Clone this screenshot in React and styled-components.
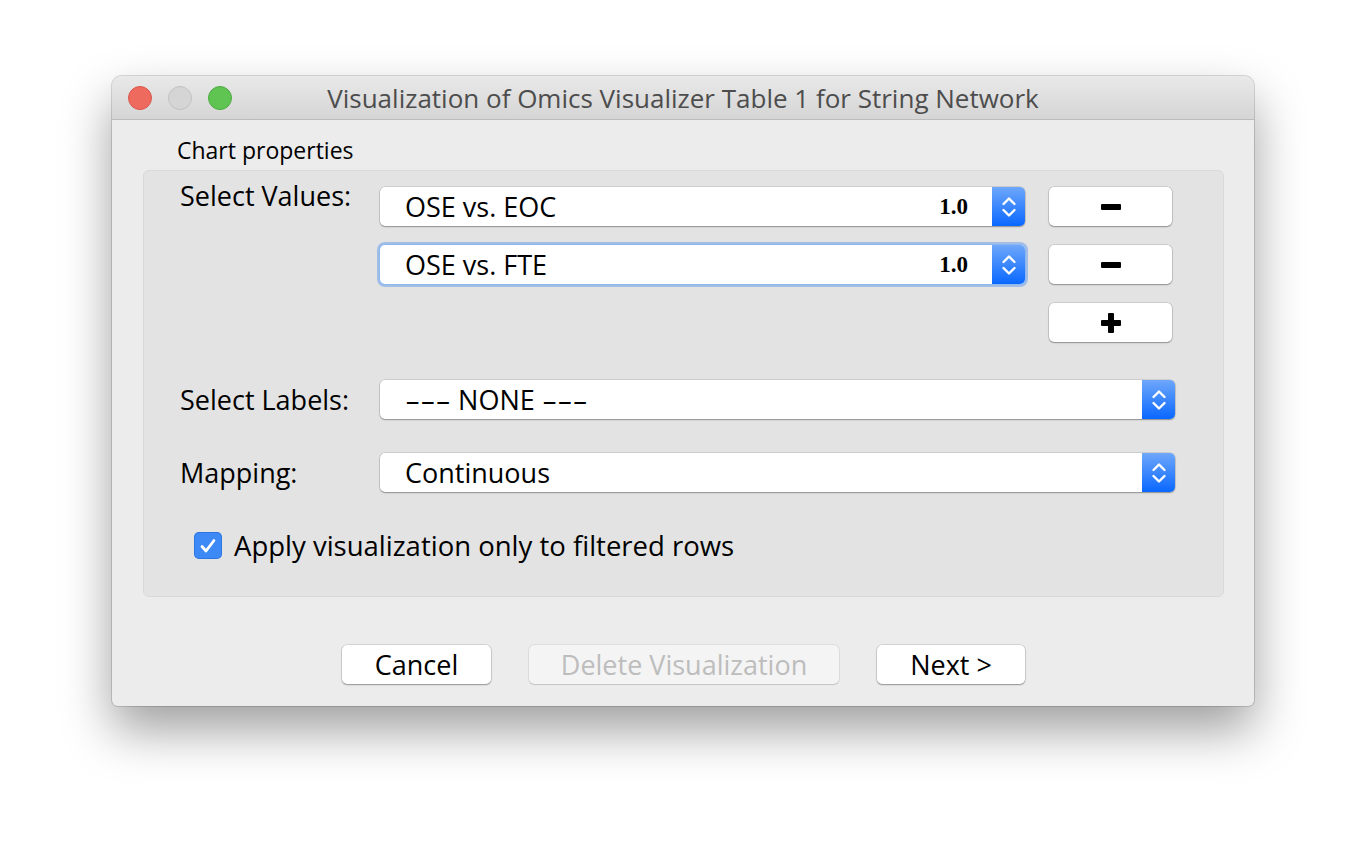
import { Fragment } from "react";
import styled, { createGlobalStyle } from "styled-components";

const GlobalStyle = createGlobalStyle`
  html, body {
    margin: 0;
    padding: 0;
    background: #ffffff;
  }
  body {
    font-family: "Open Sans", "DejaVu Sans", sans-serif;
    color: #000;
  }
`;

const Desktop = styled.div`
  padding: 76px 0 0 112px;
  height: 854px;
  box-sizing: border-box;
  overflow: hidden;
`;

const Window = styled.div`
  width: 1142px;
  background: #ececec;
  border-radius: 10px 10px 6px 6px;
  box-shadow: 0 24px 50px rgba(0, 0, 0, 0.38), 0 0 0 1px rgba(0, 0, 0, 0.14);
  overflow: hidden;
`;

const TitleBar = styled.div`
  height: 43px;
  display: grid;
  grid-template-columns: 1fr auto 1fr;
  align-items: center;
  background: linear-gradient(#e9e9e9, #d5d5d5);
  border-bottom: 1px solid #bcbcbc;
`;

const Lights = styled.div`
  display: flex;
  gap: 16px;
  padding-left: 16px;
`;

const Light = styled.span`
  width: 24px;
  height: 24px;
  box-sizing: border-box;
  border-radius: 50%;
  background: ${(p) => p.$fill};
  border: 1px solid ${(p) => p.$edge};
`;

const Title = styled.div`
  font-size: 26px;
  color: #4d4d4d;
  white-space: nowrap;
`;

const Body = styled.div`
  padding: 0 30px 22px 31px;
`;

const Heading = styled.div`
  height: 50px;
  box-sizing: border-box;
  padding: 15px 0 0 34px;
  font-size: 23px;
  line-height: 30px;
`;

const Panel = styled.div`
  height: 427px;
  box-sizing: border-box;
  background: #e3e3e3;
  border: 1px solid #d9d9d9;
  border-radius: 6px;
  padding: 16px 48px 0 36px;
`;

const ValuesGrid = styled.div`
  display: grid;
  grid-template-columns: 176px 645px 123px;
  grid-auto-rows: 39px;
  column-gap: 24px;
  row-gap: 19px;
`;

const Label = styled.div`
  font-size: 27px;
  line-height: 27px;
  white-space: nowrap;
  align-self: ${(p) => (p.$top ? "start" : "center")};
  margin-top: ${(p) => (p.$top ? "-5px" : "0")};
`;

const FieldRow = styled.div`
  display: grid;
  grid-template-columns: 200px 795px;
  height: 39px;
  align-items: center;
  margin-top: ${(p) => p.$gap}px;
`;

const Combo = styled.div`
  height: 39px;
  box-sizing: border-box;
  display: flex;
  align-items: stretch;
  background: #fff;
  border-radius: 5px;
  box-shadow: ${(p) =>
    p.$focused
      ? "0 0 0 1px #8db7f0, 0 0 0 3px rgba(110, 160, 235, 0.55)"
      : "0 0 0 0.5px rgba(0,0,0,0.18), 0 1px 1.5px rgba(0,0,0,0.3)"};
`;

const ComboText = styled.div`
  flex: 1;
  display: flex;
  align-items: center;
  padding-left: 25px;
  font-size: 27px;
  white-space: pre;
`;

const Dashes = styled.span`
  display: inline-block;
  transform: scaleX(1.75);
  transform-origin: 0 50%;
  margin-right: 20px;
`;

const Weight = styled.span`
  margin-left: auto;
  margin-right: 24px;
  font-family: "Liberation Serif", "Times New Roman", serif;
  font-weight: bold;
  font-size: 23px;
`;

const Stepper = styled.div`
  width: 33px;
  flex-shrink: 0;
  display: flex;
  align-items: center;
  justify-content: center;
  border-radius: 0 5px 5px 0;
  background: linear-gradient(#6ea7fb, #0a68ff);
`;

const SquareButton = styled.button`
  height: 39px;
  width: 123px;
  padding: 0;
  display: flex;
  align-items: center;
  justify-content: center;
  background: #fff;
  border: none;
  border-radius: 5px;
  box-shadow: 0 0 0 0.5px rgba(0, 0, 0, 0.2), 0 1px 1.5px rgba(0, 0, 0, 0.3);
  grid-column: 3;
`;

const CheckRow = styled.label`
  display: flex;
  align-items: center;
  gap: 12px;
  margin: 35px 0 0 14px;
  font-size: 27.5px;
`;

const CheckBox = styled.span`
  width: 28px;
  height: 27px;
  border-radius: 5px;
  background: #3d8af7;
  display: flex;
  align-items: center;
  justify-content: center;
  box-shadow: inset 0 0 0 1px rgba(0, 60, 160, 0.25);
`;

const Footer = styled.div`
  display: flex;
  justify-content: center;
  gap: 38px;
  margin-top: 48px;
`;

const PushButton = styled.button`
  height: 39px;
  width: ${(p) => p.$w}px;
  padding: 0;
  font-family: "Open Sans", "DejaVu Sans", sans-serif;
  font-size: 27px;
  color: ${(p) => (p.disabled ? "#bdbdbd" : "#000")};
  background: ${(p) => (p.disabled ? "#f4f4f4" : "#fff")};
  border: none;
  border-radius: 5px;
  box-shadow: ${(p) =>
    p.disabled
      ? "0 0 0 0.5px rgba(0,0,0,0.12), 0 1px 1px rgba(0,0,0,0.12)"
      : "0 0 0 0.5px rgba(0,0,0,0.2), 0 1px 1.5px rgba(0,0,0,0.3)"};
`;

const Chevrons = () => (
  <svg width="16" height="24" viewBox="0 0 16 24">
    <path
      d="M2.5 9 L8 3.5 L13.5 9 M2.5 15 L8 20.5 L13.5 15"
      fill="none"
      stroke="#fff"
      strokeWidth="2.4"
      strokeLinecap="round"
      strokeLinejoin="round"
    />
  </svg>
);

const Minus = () => (
  <svg width="20" height="20" viewBox="0 0 20 20">
    <rect x="0" y="7" width="20" height="6" rx="1" fill="#000" />
  </svg>
);

const Plus = () => (
  <svg width="20" height="20" viewBox="0 0 20 20">
    <rect x="0" y="7" width="20" height="6" rx="1" fill="#000" />
    <rect x="7" y="0" width="6" height="20" rx="1" fill="#000" />
  </svg>
);

const Check = () => (
  <svg width="18" height="16" viewBox="0 0 18 16">
    <path
      d="M3 8.5 L7 13 L15 2.5"
      fill="none"
      stroke="#fff"
      strokeWidth="2.8"
      strokeLinecap="round"
      strokeLinejoin="round"
    />
  </svg>
);

const values = [
  { name: "OSE vs. EOC", weight: "1.0" },
  { name: "OSE vs. FTE", weight: "1.0", focused: true },
];

const App = () => {
  return (
    <Desktop>
      <GlobalStyle />
      <Window>
        <TitleBar>
          <Lights>
            <Light $fill="#ee6a5f" $edge="#d8574c" />
            <Light $fill="#d5d5d5" $edge="#c0c0c0" />
            <Light $fill="#60c453" $edge="#4dac41" />
          </Lights>
          <Title>Visualization of Omics Visualizer Table 1 for String Network</Title>
          <div />
        </TitleBar>
        <Body>
          <Heading>Chart properties</Heading>
          <Panel>
            <ValuesGrid>
              <Label $top>Select Values:</Label>
              {values.map((v, i) => (
                <Fragment key={v.name}>
                  {i > 0 && <div />}
                  <Combo $focused={v.focused}>
                    <ComboText>
                      {v.name}
                      <Weight>{v.weight}</Weight>
                    </ComboText>
                    <Stepper>
                      <Chevrons />
                    </Stepper>
                  </Combo>
                  <SquareButton>
                    <Minus />
                  </SquareButton>
                </Fragment>
              ))}
              <SquareButton>
                <Plus />
              </SquareButton>
            </ValuesGrid>
            <FieldRow $gap={38}>
              <Label>Select Labels:</Label>
              <Combo>
                <ComboText>
                  <Dashes>---</Dashes> NONE <Dashes>---</Dashes>
                </ComboText>
                <Stepper>
                  <Chevrons />
                </Stepper>
              </Combo>
            </FieldRow>
            <FieldRow $gap={34}>
              <Label>Mapping:</Label>
              <Combo>
                <ComboText>Continuous</ComboText>
                <Stepper>
                  <Chevrons />
                </Stepper>
              </Combo>
            </FieldRow>
            <CheckRow>
              <CheckBox>
                <Check />
              </CheckBox>
              Apply visualization only to filtered rows
            </CheckRow>
          </Panel>
          <Footer>
            <PushButton $w={149}>Cancel</PushButton>
            <PushButton $w={310} disabled>
              Delete Visualization
            </PushButton>
            <PushButton $w={148}>Next &gt;</PushButton>
          </Footer>
        </Body>
      </Window>
    </Desktop>
  );
};

export default App;
